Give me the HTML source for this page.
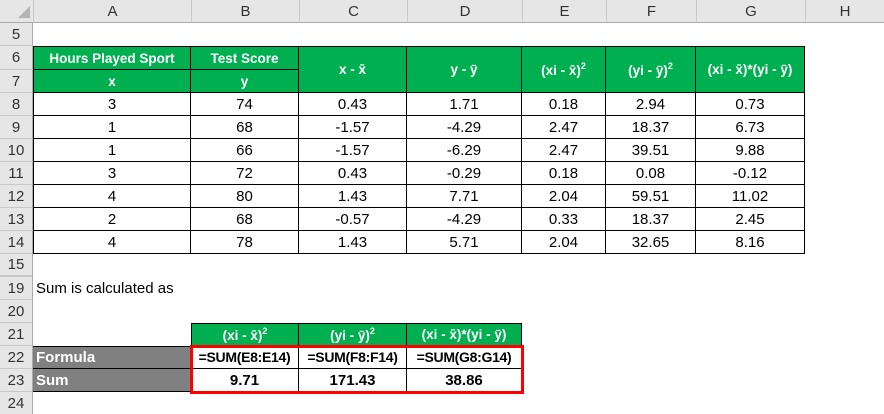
<!DOCTYPE html>
<html><head><meta charset="utf-8"><style>
*{margin:0;padding:0;box-sizing:border-box}
body{width:884px;height:414px;background:#fff;font-family:"Liberation Sans",Arial,sans-serif;font-size:14px;color:#000;position:relative;overflow:hidden}
.a{position:absolute;display:flex;align-items:center;justify-content:center;white-space:nowrap}
.hd{background:#e6e6e6;color:#333;font-size:15px}
.g{background:#00b050;color:#fff;font-weight:bold;font-size:13.5px}
.b{border-right:1px solid #000;border-bottom:1px solid #000}
.s{font-size:9px;vertical-align:6px}
</style></head><body>
<div class="a hd" style="left:0;top:0;width:884px;height:23px;border-bottom:1px solid #ababab"></div>
<div style="position:absolute;left:18px;top:6px;width:0;height:0;border-left:12px solid transparent;border-bottom:12px solid #b4b4b4"></div>
<div class="a hd" style="left:33px;top:0;width:158px;height:23px;border-left:1px solid #c8c8c8;border-bottom:1px solid #ababab">A</div>
<div class="a hd" style="left:191px;top:0;width:108px;height:23px;border-left:1px solid #c8c8c8;border-bottom:1px solid #ababab">B</div>
<div class="a hd" style="left:299px;top:0;width:108px;height:23px;border-left:1px solid #c8c8c8;border-bottom:1px solid #ababab">C</div>
<div class="a hd" style="left:407px;top:0;width:115px;height:23px;border-left:1px solid #c8c8c8;border-bottom:1px solid #ababab">D</div>
<div class="a hd" style="left:522px;top:0;width:84px;height:23px;border-left:1px solid #c8c8c8;border-bottom:1px solid #ababab">E</div>
<div class="a hd" style="left:606px;top:0;width:90px;height:23px;border-left:1px solid #c8c8c8;border-bottom:1px solid #ababab">F</div>
<div class="a hd" style="left:696px;top:0;width:109px;height:23px;border-left:1px solid #c8c8c8;border-bottom:1px solid #ababab">G</div>
<div class="a hd" style="left:805px;top:0;width:79px;height:23px;border-left:1px solid #c8c8c8;border-bottom:1px solid #ababab">H</div>
<div class="a hd" style="left:0;top:23px;width:33px;height:391px;border-right:1px solid #ababab"></div>
<div class="a hd" style="left:0;top:23px;width:32px;height:23px;border-bottom:1px solid #c8c8c8">5</div>
<div class="a hd" style="left:0;top:46px;width:32px;height:24px;border-bottom:1px solid #c8c8c8">6</div>
<div class="a hd" style="left:0;top:70px;width:32px;height:23px;border-bottom:1px solid #c8c8c8">7</div>
<div class="a hd" style="left:0;top:93px;width:32px;height:23px;border-bottom:1px solid #c8c8c8">8</div>
<div class="a hd" style="left:0;top:116px;width:32px;height:23px;border-bottom:1px solid #c8c8c8">9</div>
<div class="a hd" style="left:0;top:139px;width:32px;height:23px;border-bottom:1px solid #c8c8c8">10</div>
<div class="a hd" style="left:0;top:162px;width:32px;height:23px;border-bottom:1px solid #c8c8c8">11</div>
<div class="a hd" style="left:0;top:185px;width:32px;height:23px;border-bottom:1px solid #c8c8c8">12</div>
<div class="a hd" style="left:0;top:208px;width:32px;height:23px;border-bottom:1px solid #c8c8c8">13</div>
<div class="a hd" style="left:0;top:231px;width:32px;height:23px;border-bottom:1px solid #c8c8c8">14</div>
<div class="a hd" style="left:0;top:254px;width:32px;height:23px;border-bottom:2px solid #c8c8c8">15</div>
<div class="a hd" style="left:0;top:277px;width:32px;height:23px;border-bottom:1px solid #c8c8c8">19</div>
<div class="a hd" style="left:0;top:300px;width:32px;height:23px;border-bottom:1px solid #c8c8c8">20</div>
<div class="a hd" style="left:0;top:323px;width:32px;height:23px;border-bottom:1px solid #c8c8c8">21</div>
<div class="a hd" style="left:0;top:346px;width:32px;height:23px;border-bottom:1px solid #c8c8c8">22</div>
<div class="a hd" style="left:0;top:369px;width:32px;height:23px;border-bottom:1px solid #c8c8c8">23</div>
<div class="a hd" style="left:0;top:392px;width:32px;height:22px">24</div>

<div class="a g b" style="left:33px;top:46px;width:158px;height:24px;border-top:1px solid #000;border-left:1px solid #000">Hours Played Sport</div>
<div class="a g b" style="left:33px;top:70px;width:158px;height:23px;border-left:1px solid #000">x</div>
<div class="a g b" style="left:191px;top:46px;width:108px;height:24px;border-top:1px solid #000">Test Score</div>
<div class="a g b" style="left:191px;top:70px;width:108px;height:23px">y</div>
<div class="a g b" style="left:299px;top:46px;width:108px;height:47px;border-top:1px solid #000">x - x̄</div>
<div class="a g b" style="left:407px;top:46px;width:115px;height:47px;border-top:1px solid #000">y - ȳ</div>
<div class="a g b" style="left:522px;top:46px;width:84px;height:47px;border-top:1px solid #000"><span>(xi - x̄)<span class="s">2</span></span></div>
<div class="a g b" style="left:606px;top:46px;width:90px;height:47px;border-top:1px solid #000"><span>(yi - ȳ)<span class="s">2</span></span></div>
<div class="a g b" style="left:696px;top:46px;width:109px;height:47px;border-top:1px solid #000">(xi - x̄)*(yi - ȳ)</div>
<div id="rows"></div>
<script>
var d=[["3","74","0.43","1.71","0.18","2.94","0.73"],["1","68","-1.57","-4.29","2.47","18.37","6.73"],["1","66","-1.57","-6.29","2.47","39.51","9.88"],["3","72","0.43","-0.29","0.18","0.08","-0.12"],["4","80","1.43","7.71","2.04","59.51","11.02"],["2","68","-0.57","-4.29","0.33","18.37","2.45"],["4","78","1.43","5.71","2.04","32.65","8.16"]];
var xs=[33,191,299,407,522,606,696,805],h="";
d.forEach(function(r,i){r.forEach(function(v,j){h+='<div class="a b" style="left:'+xs[j]+'px;top:'+(93+23*i)+'px;width:'+(xs[j+1]-xs[j])+'px;height:23px;font-size:15px'+(j==0?';border-left:1px solid #000':'')+'">'+v+'</div>';});});
document.getElementById('rows').outerHTML=h;
</script>
<div class="a" style="left:36px;top:277px;height:23px;font-size:15px">Sum is calculated as</div>

<div class="a g b" style="left:191px;top:323px;width:108px;height:23px;border-top:1px solid #000;border-left:1px solid #000"><span>(xi - x̄)<span class="s">2</span></span></div>
<div class="a g b" style="left:299px;top:323px;width:108px;height:23px;border-top:1px solid #000"><span>(yi - ȳ)<span class="s">2</span></span></div>
<div class="a g b" style="left:407px;top:323px;width:115px;height:23px;border-top:1px solid #000">(xi - x̄)*(yi - ȳ)</div>
<div class="a" style="left:33px;top:346px;width:158px;height:23px;background:#808080;color:#fff;font-weight:bold;font-size:15px;justify-content:flex-start;padding-left:3px;border-bottom:1px solid #000;border-top:1px solid #000">Formula</div>
<div class="a" style="left:33px;top:369px;width:158px;height:23px;background:#808080;color:#fff;font-weight:bold;font-size:15px;justify-content:flex-start;padding-left:3px;border-bottom:1px solid #000">Sum</div>
<div class="a b" style="left:191px;top:346px;width:108px;height:23px;font-weight:bold;font-size:14px;letter-spacing:-0.3px">=SUM(E8:E14)</div>
<div class="a b" style="left:299px;top:346px;width:108px;height:23px;font-weight:bold;font-size:14px;letter-spacing:-0.3px">=SUM(F8:F14)</div>
<div class="a b" style="left:407px;top:346px;width:115px;height:23px;font-weight:bold;font-size:14px;letter-spacing:-0.3px">=SUM(G8:G14)</div>
<div class="a b" style="left:191px;top:369px;width:108px;height:23px;font-weight:bold;font-size:15px">9.71</div>
<div class="a b" style="left:299px;top:369px;width:108px;height:23px;font-weight:bold;font-size:15px">171.43</div>
<div class="a b" style="left:407px;top:369px;width:115px;height:23px;font-weight:bold;font-size:15px">38.86</div>
<div style="position:absolute;left:190px;top:345px;width:334px;height:49px;border:3px solid #ff0000"></div>
</body></html>
